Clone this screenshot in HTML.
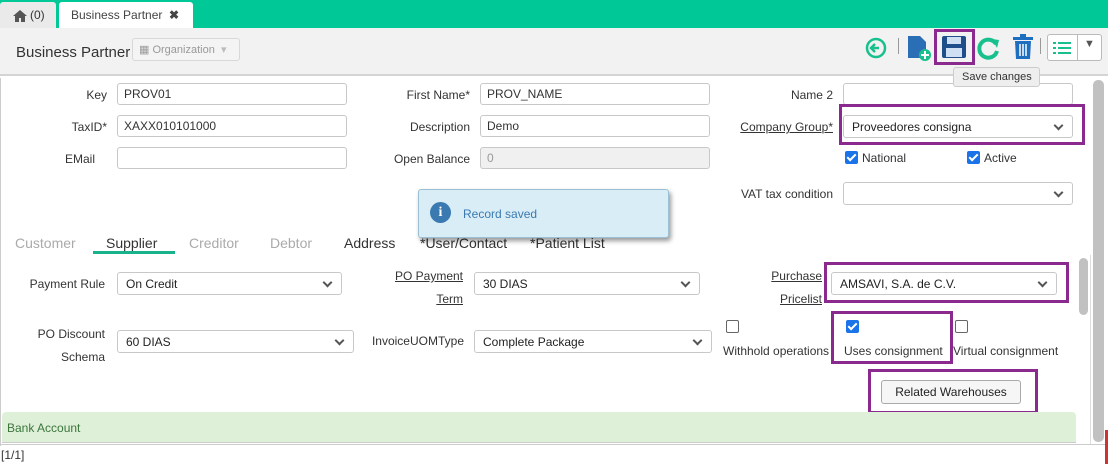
<!DOCTYPE html>
<html><head><style>
*{box-sizing:border-box;margin:0;padding:0}
body{width:1108px;height:464px;position:relative;overflow:hidden;background:#fff;font-family:"Liberation Sans",sans-serif;font-size:12px;color:#333}
.a{position:absolute}
.lbl{position:absolute;text-align:right;font-size:12px;color:#333;white-space:nowrap}
.inp{position:absolute;height:22px;border:1px solid #c8c8c8;border-radius:3px;background:#fff;padding:3px 6px;font-size:12px;color:#333}
.sel{position:absolute;height:23px;border:1px solid #c8c8c8;border-radius:3px;background:#fff;padding:4px 8px;font-size:12px;color:#222}
.sel:after{content:"";position:absolute;right:10px;top:6px;width:5px;height:5px;border-right:2px solid #555;border-bottom:2px solid #555;transform:rotate(45deg)}
.pb{position:absolute;border:3px solid #8a2a8e}
.cb{position:absolute;width:13px;height:13px;border-radius:2px;background:#1a73e8}
.cb:after{content:"";position:absolute;left:4px;top:1px;width:3px;height:7px;border-right:2px solid #fff;border-bottom:2px solid #fff;transform:rotate(45deg)}
.cbe{position:absolute;width:13px;height:13px;border-radius:2px;border:1px solid #666;background:#fff}
u{text-decoration:underline}
</style></head><body>
<div class="a" style="left:0;top:0;width:1108px;height:28px;background:#00c896"></div>
<div class="a" style="left:0;top:2px;width:56px;height:26px;background:#eaeaea;border-radius:3px 3px 0 0"></div>
<svg class="a" style="left:12px;top:9px" width="16" height="13"><path d="M8 1L1 7h2v6h4V9h2v4h4V7h2z" fill="#555"/></svg>
<div class="a" style="left:30px;top:8px;font-size:12px">(0)</div>
<div class="a" style="left:59px;top:2px;width:134px;height:26px;background:#fff;border-radius:3px 3px 0 0;padding:6px 0 0 12px;font-size:12px;color:#444;white-space:nowrap">Business Partner &nbsp;<b>✖</b></div>
<div class="a" style="left:0;top:28px;width:1108px;height:48px;background:#f2f2f2;border-bottom:2px solid #d4d4d4"></div>
<div class="a" style="left:16px;top:44px;font-size:15px;color:#333">Business Partner</div>
<div class="a" style="left:132px;top:38px;width:108px;height:23px;border:1px solid #d8d8d8;border-radius:3px;background:#f4f4f4;padding:4px 6px;font-size:11px;color:#999;white-space:nowrap">&#9638; Organization <span style="position:absolute;left:88px;top:4px;color:#bbb">▾</span></div>
<svg class="a" style="left:864px;top:36px" width="24" height="24"><circle cx="12" cy="12" r="9" fill="none" stroke="#17c08c" stroke-width="2.5"/><path d="M15 12H8M11 8l-4 4 4 4" fill="none" stroke="#17c08c" stroke-width="2.5"/></svg>
<div class="a" style="left:898px;top:38px;width:1px;height:16px;background:#999"></div>
<svg class="a" style="left:906px;top:34px" width="26" height="28"><path d="M2 2h12l6 6v16H2z" fill="#2a6fb5"/><circle cx="19" cy="21" r="6" fill="#17c08c"/><path d="M19 17v8M15 21h8" stroke="#fff" stroke-width="2"/></svg>
<div class="pb" style="left:934px;top:29px;width:41px;height:36px"></div>
<svg class="a" style="left:941px;top:35px" width="26" height="24"><rect x="1" y="1" width="24" height="22" rx="2" fill="#1f4f8a"/><rect x="6" y="2" width="14" height="7" fill="#cfe0f2"/><rect x="5" y="13" width="16" height="9" fill="#cfe0f2"/></svg>
<svg class="a" style="left:976px;top:35px" width="26" height="26"><path d="M20 9A9 9 0 1 0 21 16" fill="none" stroke="#17c08c" stroke-width="4"/><path d="M16 4l7 1-2 8z" fill="#17c08c"/></svg>
<svg class="a" style="left:1012px;top:34px" width="22" height="26"><rect x="1" y="3" width="20" height="3" fill="#1e6fc0"/><rect x="8" y="0" width="6" height="3" fill="#1e6fc0"/><path d="M3 7h16l-1 18H4z" fill="#1e6fc0"/><path d="M8 10v12M11 10v12M14 10v12" stroke="#fff" stroke-width="1.5"/></svg>
<div class="a" style="left:1040px;top:38px;width:1px;height:16px;background:#999"></div>
<div class="a" style="left:1047px;top:34px;width:55px;height:27px;border:1px solid #bbb;border-radius:3px;background:#fff"></div>
<div class="a" style="left:1077px;top:35px;width:1px;height:25px;background:#bbb"></div>
<svg class="a" style="left:1052px;top:40px" width="20" height="16"><g fill="#17c08c"><rect x="1" y="2" width="3" height="2"/><rect x="6" y="2" width="13" height="2"/><rect x="1" y="7" width="3" height="2"/><rect x="6" y="7" width="13" height="2"/><rect x="1" y="12" width="3" height="2"/><rect x="6" y="12" width="13" height="2"/></g></svg>
<div class="a" style="left:1084px;top:38px;font-size:11px;color:#555">▼</div>
<div class="a" style="left:953px;top:67px;width:87px;height:20px;background:#eee;border:1px solid #ccc;border-radius:3px;font-size:11px;color:#333;padding:3px 0 0 8px;z-index:5">Save changes</div>
<div class="a" style="left:0;top:78px;width:1px;height:368px;background:#ccc"></div>
<div class="lbl" style="left:0;width:107px;top:88px">Key</div>
<div class="inp" style="left:117px;top:83px;width:230px">PROV01</div>
<div class="lbl" style="left:0;width:107px;top:120px">TaxID*</div>
<div class="inp" style="left:117px;top:115px;width:230px">XAXX010101000</div>
<div class="lbl" style="left:0;width:95px;top:152px">EMail</div>
<div class="inp" style="left:117px;top:147px;width:230px"></div>
<div class="lbl" style="left:340px;width:130px;top:88px">First Name*</div>
<div class="inp" style="left:480px;top:83px;width:230px">PROV_NAME</div>
<div class="lbl" style="left:340px;width:130px;top:120px">Description</div>
<div class="inp" style="left:480px;top:115px;width:230px">Demo</div>
<div class="lbl" style="left:340px;width:130px;top:152px">Open Balance</div>
<div class="inp" style="left:480px;top:147px;width:230px;background:#f0f0f0;color:#999">0</div>
<div class="lbl" style="left:700px;width:133px;top:88px">Name 2</div>
<div class="inp" style="left:843px;top:83px;width:230px"></div>
<div class="lbl" style="left:700px;width:133px;top:120px"><u>Company Group*</u></div>
<div class="sel" style="left:843px;top:115px;width:230px">Proveedores consigna</div>
<div class="pb" style="left:839px;top:104px;width:246px;height:41px"></div>
<div class="cb" style="left:845px;top:151px"></div><div class="a" style="left:862px;top:151px">National</div>
<div class="cb" style="left:967px;top:151px"></div><div class="a" style="left:984px;top:151px">Active</div>
<div class="lbl" style="left:700px;width:133px;top:187px">VAT tax condition</div>
<div class="sel" style="left:843px;top:182px;width:230px"></div>
<div class="a" style="left:15px;top:235px;font-size:14px;color:#aaa">Customer</div>
<div class="a" style="left:106px;top:235px;font-size:14px;color:#333">Supplier</div>
<div class="a" style="left:93px;top:251px;width:82px;height:3px;background:#17b38c"></div>
<div class="a" style="left:189px;top:235px;font-size:14px;color:#aaa">Creditor</div>
<div class="a" style="left:270px;top:235px;font-size:14px;color:#aaa">Debtor</div>
<div class="a" style="left:344px;top:235px;font-size:14px;color:#333">Address</div>
<div class="a" style="left:420px;top:235px;font-size:14px;color:#333">*User/Contact</div>
<div class="a" style="left:530px;top:235px;font-size:14px;color:#333">*Patient List</div>
<div class="a" style="left:418px;top:189px;width:251px;height:49px;background:#d9edf7;border:1px solid #9cbfd5;border-radius:3px;box-shadow:2px 3px 5px rgba(0,0,0,.4);z-index:4">
<div class="a" style="left:11px;top:12px;width:21px;height:21px;border-radius:50%;background:#3a7ab0;color:#fff;font-weight:bold;text-align:center;font-size:14px;line-height:21px;font-family:'Liberation Serif',serif">i</div>
<div class="a" style="left:44px;top:17px;color:#3a7ab0;font-size:12px">Record saved</div></div>
<div class="lbl" style="left:0;width:105px;top:277px">Payment Rule</div>
<div class="sel" style="left:117px;top:272px;width:225px">On Credit</div>
<div class="lbl" style="left:360px;width:103px;top:265px;line-height:23px"><u>PO Payment</u><br><u>Term</u></div>
<div class="sel" style="left:474px;top:272px;width:226px">30 DIAS</div>
<div class="lbl" style="left:720px;width:102px;top:265px;line-height:23px"><u>Purchase</u><br><u>Pricelist</u></div>
<div class="sel" style="left:831px;top:272px;width:226px">AMSAVI, S.A. de C.V.</div>
<div class="pb" style="left:824px;top:262px;width:245px;height:41px"></div>
<div class="lbl" style="left:0;width:105px;top:323px;line-height:23px">PO Discount<br>Schema</div>
<div class="sel" style="left:117px;top:330px;width:237px">60 DIAS</div>
<div class="lbl" style="left:360px;width:104px;top:334px">InvoiceUOMType</div>
<div class="sel" style="left:474px;top:330px;width:238px">Complete Package</div>
<div class="cbe" style="left:726px;top:320px"></div>
<div class="a" style="left:723px;top:344px">Withhold operations</div>
<div class="cb" style="left:846px;top:320px"></div>
<div class="a" style="left:844px;top:344px;background:#fff;padding-right:2px">Uses consignment</div>
<div class="cbe" style="left:955px;top:320px"></div>
<div class="a" style="left:953px;top:344px">Virtual consignment</div>
<div class="pb" style="left:831px;top:311px;width:122px;height:53px"></div>
<div class="a" style="left:881px;top:380px;width:140px;height:24px;border:1px solid #aaa;border-radius:3px;background:#f6f6f6;text-align:center;padding-top:4px;font-size:12px;color:#222">Related Warehouses</div>
<div class="pb" style="left:868px;top:369px;width:170px;height:45px"></div>
<div class="a" style="left:2px;top:412px;width:1074px;height:31px;background:#dff0d8;border-bottom:1px solid #ccc;border-radius:4px 4px 0 0;padding:9px 0 0 5px;color:#3c763d;font-size:12px">Bank Account</div>
<div class="a" style="left:1090px;top:255px;width:1px;height:190px;background:#ddd"></div>
<div class="a" style="left:1079px;top:258px;width:9px;height:57px;background:#c1c1c1;border-radius:5px"></div>
<div class="a" style="left:1093px;top:80px;width:11px;height:362px;background:#c1c1c1;border-radius:5px"></div>
<div class="a" style="left:0;top:444px;width:1108px;height:1px;background:#ccc"></div>
<div class="a" style="left:1px;top:448px;font-size:12px;color:#333">[1/1]</div>
<div class="a" style="left:1105px;top:430px;width:3px;height:34px;background:#c33"></div>
</body></html>
